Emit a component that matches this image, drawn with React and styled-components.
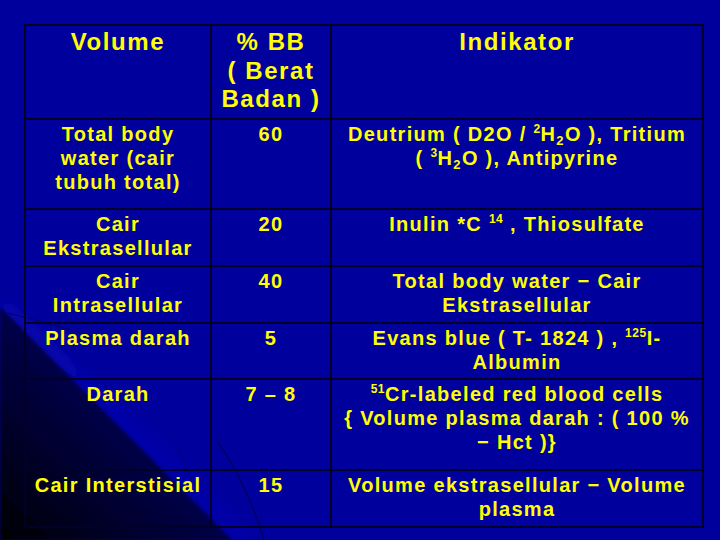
import React from 'react'
import styled, { createGlobalStyle } from 'styled-components'

const Global = createGlobalStyle`
  html, body {
    margin: 0;
    padding: 0;
    background: #00009c;
  }
`

const Slide = styled.div`
  position: relative;
  width: 720px;
  height: 540px;
  overflow: hidden;
  background: #00009c;
  padding: 24px 18px 0 24px;
  box-sizing: border-box;
  font-family: 'Liberation Sans', Arial, sans-serif;
  font-weight: bold;
  color: #ffff00;
`

const Backdrop = styled.svg`
  position: absolute;
  left: 0;
  top: 0;
  width: 720px;
  height: 540px;
  pointer-events: none;
`

const Table = styled.table`
  position: relative;
  border-collapse: collapse;
  table-layout: fixed;
  width: 678px;
  border: 2px solid #000028;
`

const Row = styled.tr`
  height: ${(p) => p.$h}px;
`

const Cell = styled.td`
  border: 2px solid #000028;
  vertical-align: top;
  text-align: center;
  white-space: nowrap;
  padding: 2px 2px 0;
  font-size: ${(p) => (p.$head ? 24 : 20)}px;
  line-height: ${(p) => (p.$head ? 28.5 : 24)}px;
  letter-spacing: ${(p) => (p.$head ? 1.6 : 1.3)}px;
  box-sizing: border-box;
`

const Sup = styled.span`
  font-size: 0.6em;
  line-height: 0;
  vertical-align: 0.65em;
  letter-spacing: 0.5px;
`

const Sub = styled.span`
  font-size: 0.65em;
  line-height: 0;
  vertical-align: -0.3em;
`

const Decor = () => (
  <Backdrop viewBox="0 0 720 540">
    <defs>
      <linearGradient id="shade" gradientUnits="userSpaceOnUse" x1="120" y1="424" x2="10" y2="535">
        <stop offset="0" stopColor="#00004a" />
        <stop offset="0.5" stopColor="#00002a" />
        <stop offset="1" stopColor="#000006" />
      </linearGradient>
      <linearGradient id="sheen" gradientUnits="userSpaceOnUse" x1="0" y1="300" x2="260" y2="540">
        <stop offset="0" stopColor="#2020ff" stopOpacity="0.18" />
        <stop offset="1" stopColor="#1a1aff" stopOpacity="0.1" />
      </linearGradient>
      <filter id="soft">
        <feGaussianBlur stdDeviation="5" />
      </filter>
      <filter id="edge">
        <feGaussianBlur stdDeviation="0.8" />
      </filter>
    </defs>
    <polygon points="0,304 14,304 262,540 232,540 0,308" fill="url(#sheen)" filter="url(#soft)" />
    <polygon points="0,307 232,540 0,540" fill="url(#shade)" filter="url(#edge)" />
    <path d="M8 313 Q60 326 112 342" stroke="#000040" strokeWidth="1.2" fill="none" opacity="0.6" />
    <path d="M178 448 Q192 478 200 512" stroke="#000050" strokeWidth="1" fill="none" opacity="0.4" />
    <path d="M218 442 Q248 486 264 540" stroke="#000040" strokeWidth="1.3" fill="none" opacity="0.75" />
  </Backdrop>
)

const rows = [
  {
    h: 90,
    a: <>Total body<br />water (cair<br />tubuh total)</>,
    b: '60',
    c: (
      <>
        Deutrium ( D2O / <Sup>2</Sup>H<Sub>2</Sub>O ), Tritium
        <br />( <Sup>3</Sup>H<Sub>2</Sub>O ), Antipyrine
      </>
    ),
  },
  {
    h: 57,
    a: <>Cair<br />Ekstrasellular</>,
    b: '20',
    c: <>Inulin *C <Sup>14</Sup> , Thiosulfate</>,
  },
  {
    h: 57,
    a: <>Cair<br />Intrasellular</>,
    b: '40',
    c: <>Total body water − Cair<br />Ekstrasellular</>,
  },
  {
    h: 56,
    a: 'Plasma darah',
    b: '5',
    c: <>Evans blue ( T- 1824 ) , <Sup>125</Sup>I-<br />Albumin</>,
  },
  {
    h: 91,
    a: 'Darah',
    b: '7 – 8',
    c: (
      <>
        <Sup>51</Sup>Cr-labeled red blood cells
        <br />{'{'} Volume plasma darah : ( 100 %
        <br />− Hct ){'}'}
      </>
    ),
  },
  {
    h: 57,
    a: 'Cair Interstisial',
    b: '15',
    c: <>Volume ekstrasellular − Volume<br />plasma</>,
  },
]

export default function App() {
  return (
    <>
      <Global />
      <Slide>
        <Decor />
        <Table>
          <colgroup>
            <col style={{ width: 186 }} />
            <col style={{ width: 120 }} />
            <col style={{ width: 372 }} />
          </colgroup>
          <tbody>
            <Row $h={94}>
              <Cell $head>Volume</Cell>
              <Cell $head>% BB<br />( Berat<br />Badan )</Cell>
              <Cell $head>Indikator</Cell>
            </Row>
            {rows.map((r, i) => (
              <Row key={i} $h={r.h}>
                <Cell>{r.a}</Cell>
                <Cell>{r.b}</Cell>
                <Cell>{r.c}</Cell>
              </Row>
            ))}
          </tbody>
        </Table>
      </Slide>
    </>
  )
}
